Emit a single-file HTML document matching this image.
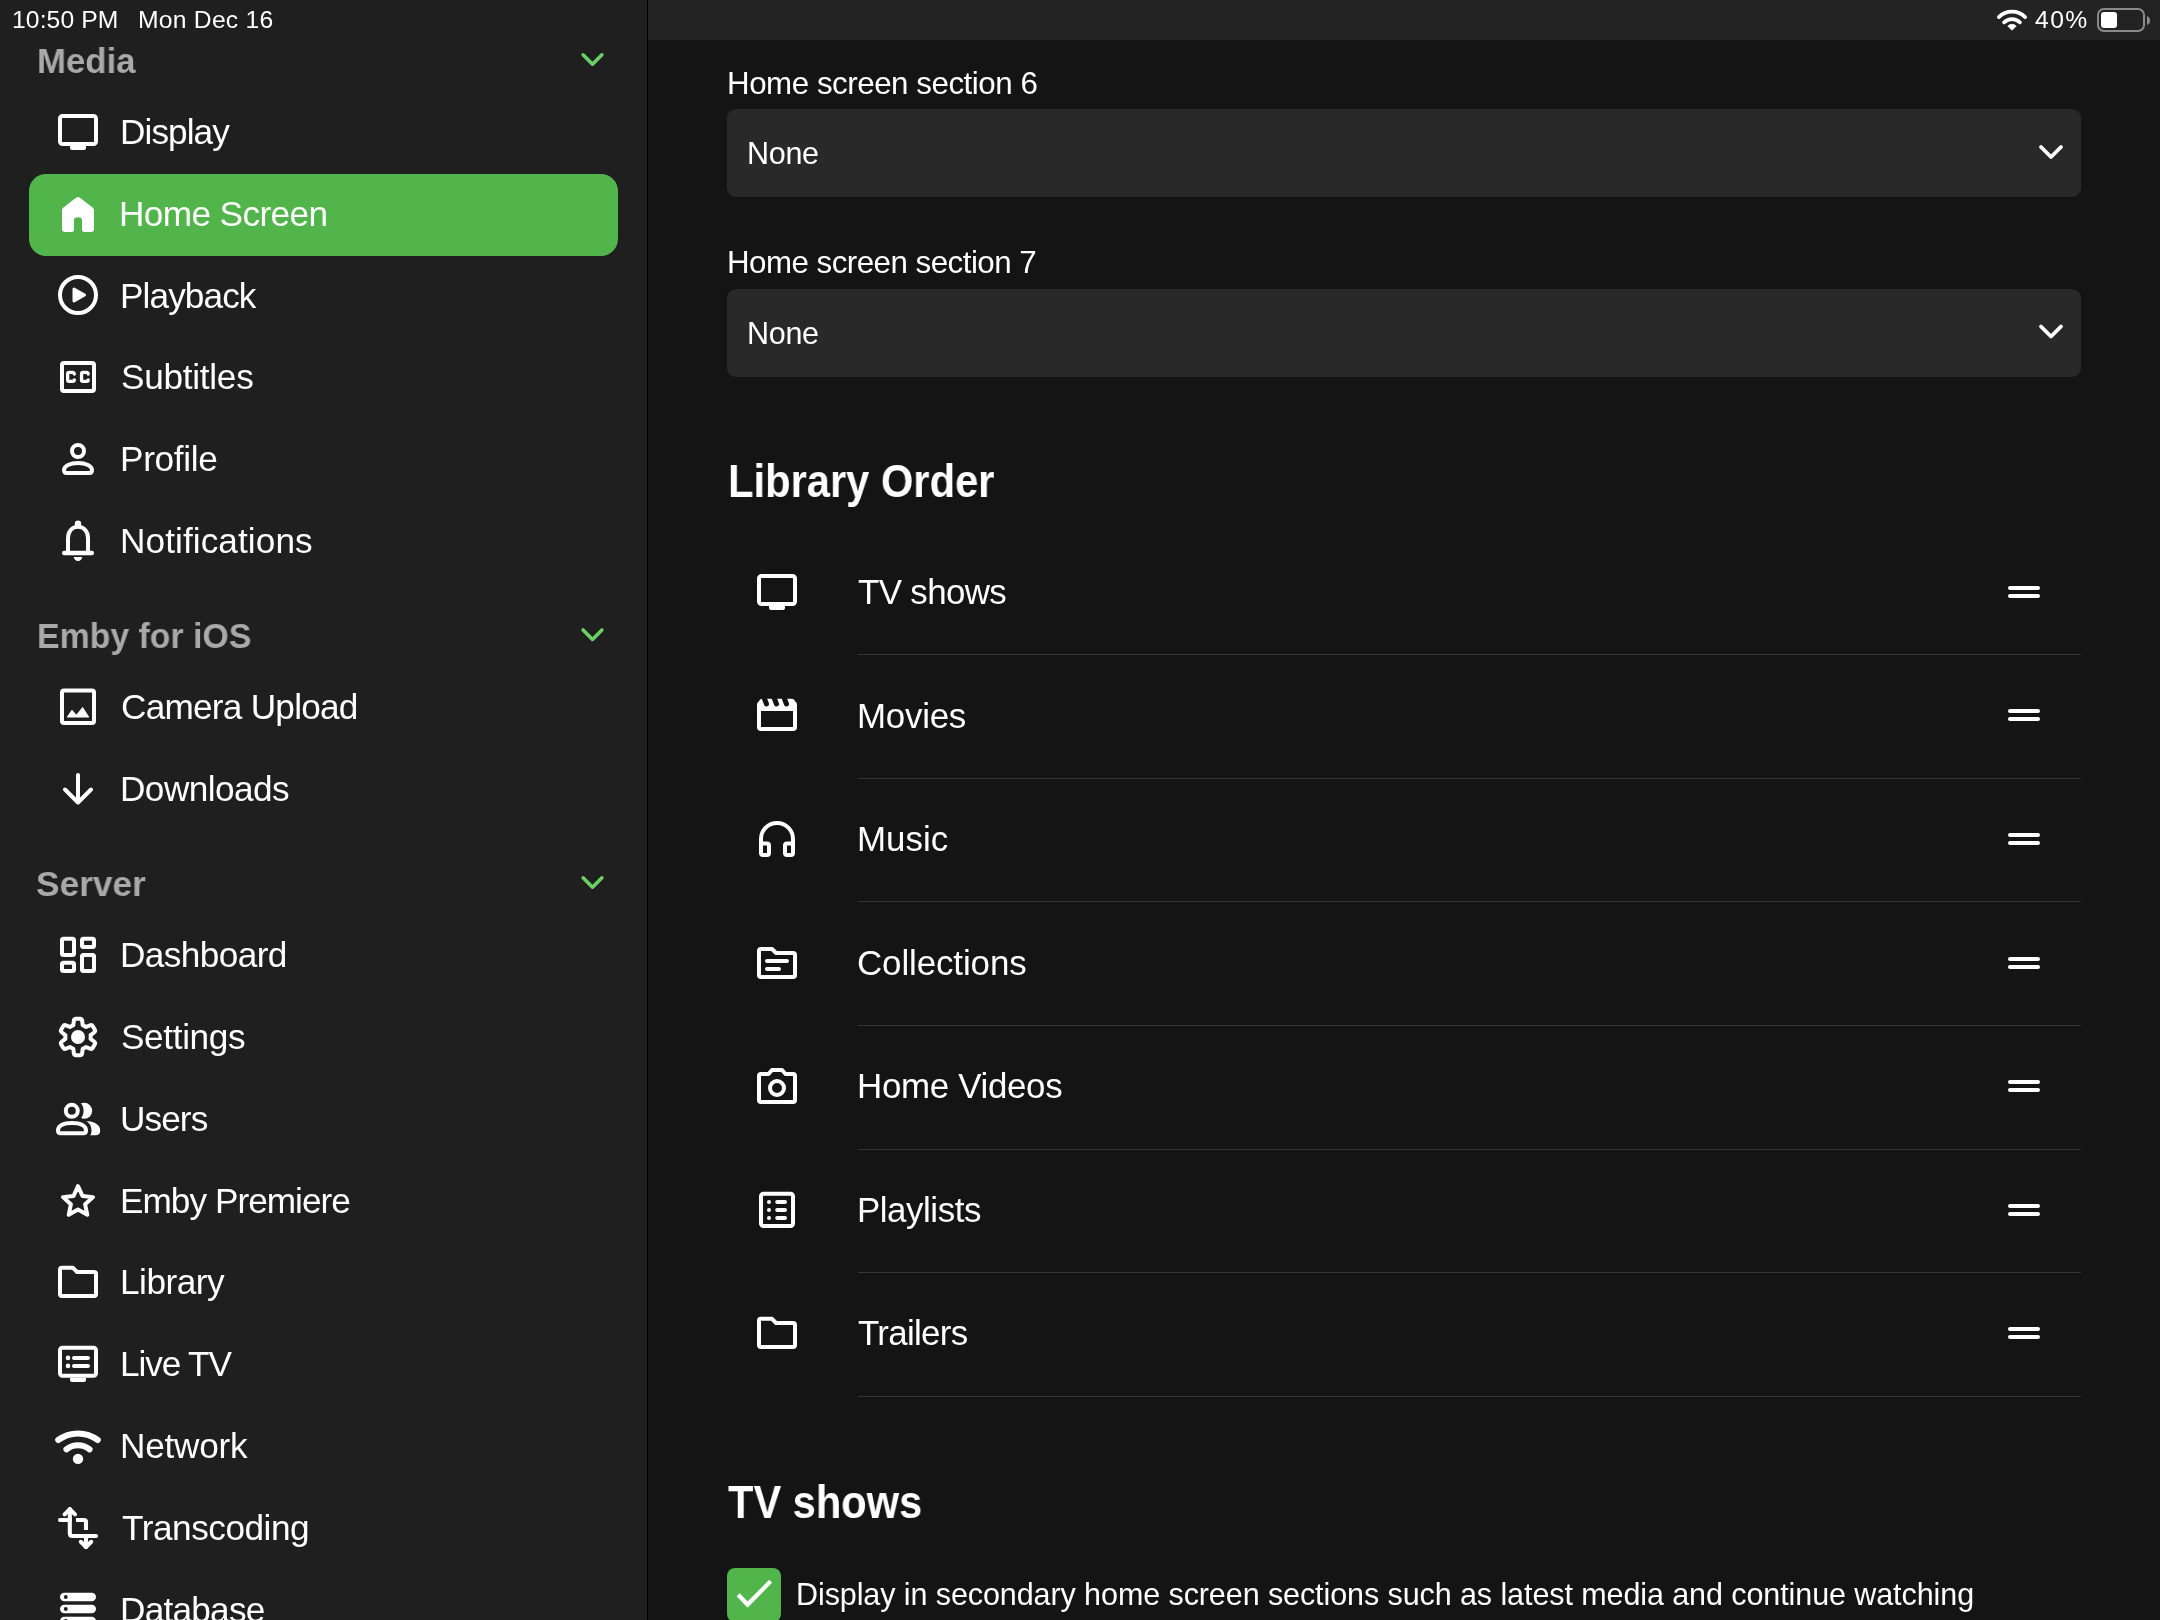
<!DOCTYPE html>
<html><head><meta charset="utf-8"><style>
html,body{margin:0;padding:0;width:2160px;height:1620px;overflow:hidden;background:#141414;font-family:'Liberation Sans', sans-serif}
.t{position:absolute;line-height:0;white-space:nowrap;will-change:transform}
#sb{position:absolute;left:0;top:0;width:647px;height:1620px;background:#1f1f1f}
#line{position:absolute;left:647px;top:0;width:1px;height:1620px;background:#000}
#top{position:absolute;left:648px;top:0;width:1512px;height:40px;background:#232323}
#hl{position:absolute;left:29px;top:174px;width:589px;height:82px;border-radius:17px;background:#52b54b}
.sel{position:absolute;left:727px;width:1354px;height:88px;border-radius:9px;background:#292929}
.hb{position:absolute;left:2008px;width:32px;height:4px;border-radius:2px;background:#fff}
.sep{position:absolute;left:858px;width:1223px;height:1px;background:#353535}
.cb{position:absolute;left:727px;top:1568px;width:54px;height:54px;border-radius:8px;background:#52b54b}
svg{position:absolute;left:0;top:0}
</style></head><body>
<div id="sb"></div><div id="line"></div><div id="top"></div><div id="hl"></div>
<div class="t" id="t0" style="left:12.20px;top:20.05px;font-size:24.7px;color:#fff;letter-spacing:0.100px;">10:50 PM</div>
<div class="t" id="t1" style="left:137.70px;top:20.05px;font-size:24.7px;color:#fff;letter-spacing:0.233px;">Mon Dec 16</div>
<div class="t" id="t2" style="left:2035.00px;top:20.05px;font-size:24.7px;color:#fff;letter-spacing:1.400px;">40%</div>
<div class="t" id="t3" style="left:36.64px;top:60.78px;font-size:35.5px;font-weight:bold;color:#a9a9a9;letter-spacing:0.000px;transform:scaleX(0.9799);transform-origin:0 0;">Media</div>
<div class="t" id="t4" style="left:36.79px;top:636.08px;font-size:35.5px;font-weight:bold;color:#a9a9a9;letter-spacing:0.000px;transform:scaleX(0.9532);transform-origin:0 0;">Emby for iOS</div>
<div class="t" id="t5" style="left:36.20px;top:884.49px;font-size:35.5px;font-weight:bold;color:#a9a9a9;letter-spacing:0.000px;transform:scaleX(0.9928);transform-origin:0 0;">Server</div>
<div class="t" id="t6" style="left:120.40px;top:131.58px;font-size:35.2px;color:#fff;letter-spacing:-0.917px;">Display</div>
<div class="t" id="t7" style="left:119.40px;top:213.58px;font-size:35.2px;color:#fff;letter-spacing:-0.610px;">Home Screen</div>
<div class="t" id="t8" style="left:120.40px;top:295.58px;font-size:35.2px;color:#fff;letter-spacing:-0.907px;">Playback</div>
<div class="t" id="t9" style="left:121.40px;top:376.58px;font-size:35.2px;color:#fff;letter-spacing:-0.275px;">Subtitles</div>
<div class="t" id="t10" style="left:120.40px;top:458.58px;font-size:35.2px;color:#fff;letter-spacing:-0.317px;">Profile</div>
<div class="t" id="t11" style="left:120.40px;top:540.58px;font-size:35.2px;color:#fff;letter-spacing:0.083px;">Notifications</div>
<div class="t" id="t12" style="left:121.40px;top:706.58px;font-size:35.2px;color:#fff;letter-spacing:-0.750px;">Camera Upload</div>
<div class="t" id="t13" style="left:120.40px;top:788.58px;font-size:35.2px;color:#fff;letter-spacing:-0.550px;">Downloads</div>
<div class="t" id="t14" style="left:120.40px;top:954.58px;font-size:35.2px;color:#fff;letter-spacing:-0.600px;">Dashboard</div>
<div class="t" id="t15" style="left:121.40px;top:1036.58px;font-size:35.2px;color:#fff;letter-spacing:-0.364px;">Settings</div>
<div class="t" id="t16" style="left:120.40px;top:1118.58px;font-size:35.2px;color:#fff;letter-spacing:-0.900px;">Users</div>
<div class="t" id="t17" style="left:120.40px;top:1200.58px;font-size:35.2px;color:#fff;letter-spacing:-0.967px;">Emby Premiere</div>
<div class="t" id="t18" style="left:120.40px;top:1281.58px;font-size:35.2px;color:#fff;letter-spacing:-0.483px;">Library</div>
<div class="t" id="t19" style="left:120.40px;top:1363.58px;font-size:35.2px;color:#fff;letter-spacing:-1.117px;">Live TV</div>
<div class="t" id="t20" style="left:120.40px;top:1445.58px;font-size:35.2px;color:#fff;letter-spacing:-0.250px;">Network</div>
<div class="t" id="t21" style="left:122.40px;top:1527.58px;font-size:35.2px;color:#fff;letter-spacing:-0.470px;">Transcoding</div>
<div class="t" id="t22" style="left:120.40px;top:1609.58px;font-size:35.2px;color:#fff;letter-spacing:-0.764px;">Database</div>
<div class="t" id="t23" style="left:727.20px;top:83.67px;font-size:31.3px;color:#fff;letter-spacing:-0.460px;">Home screen section 6</div>
<div class="t" id="t24" style="left:727.20px;top:263.07px;font-size:31.3px;color:#fff;letter-spacing:-0.520px;">Home screen section 7</div>
<div class="sel" style="top:109px"></div>
<div class="t" id="t25" style="left:747.00px;top:153.34px;font-size:30.5px;color:#fff;letter-spacing:-0.300px;">None</div>
<div class="sel" style="top:288.5px"></div>
<div class="t" id="t26" style="left:747.00px;top:332.83px;font-size:30.5px;color:#fff;letter-spacing:-0.300px;">None</div>
<div class="t" id="t27" style="left:727.63px;top:482.29px;font-size:45.8px;font-weight:bold;color:#fff;letter-spacing:0.000px;transform:scaleX(0.9103);transform-origin:0 0;">Library Order</div>
<div class="t" id="t28" style="left:857.50px;top:592.48px;font-size:34.9px;color:#fff;letter-spacing:-0.643px;">TV shows</div>
<div class="hb" style="top:586px"></div><div class="hb" style="top:594px"></div>
<div class="sep" style="top:654px"></div>
<div class="t" id="t29" style="left:856.90px;top:715.98px;font-size:34.9px;color:#fff;letter-spacing:-0.260px;">Movies</div>
<div class="hb" style="top:709px"></div><div class="hb" style="top:717px"></div>
<div class="sep" style="top:778px"></div>
<div class="t" id="t30" style="left:856.90px;top:839.48px;font-size:34.9px;color:#fff;letter-spacing:0.000px;">Music</div>
<div class="hb" style="top:833px"></div><div class="hb" style="top:841px"></div>
<div class="sep" style="top:901px"></div>
<div class="t" id="t31" style="left:856.90px;top:962.98px;font-size:34.9px;color:#fff;letter-spacing:-0.100px;">Collections</div>
<div class="hb" style="top:957px"></div><div class="hb" style="top:965px"></div>
<div class="sep" style="top:1025px"></div>
<div class="t" id="t32" style="left:856.70px;top:1086.48px;font-size:34.9px;color:#fff;letter-spacing:-0.320px;">Home Videos</div>
<div class="hb" style="top:1080px"></div><div class="hb" style="top:1088px"></div>
<div class="sep" style="top:1149px"></div>
<div class="t" id="t33" style="left:856.90px;top:1209.98px;font-size:34.9px;color:#fff;letter-spacing:-0.450px;">Playlists</div>
<div class="hb" style="top:1204px"></div><div class="hb" style="top:1212px"></div>
<div class="sep" style="top:1272px"></div>
<div class="t" id="t34" style="left:858.10px;top:1333.48px;font-size:34.9px;color:#fff;letter-spacing:-0.700px;">Trailers</div>
<div class="hb" style="top:1327px"></div><div class="hb" style="top:1335px"></div>
<div class="sep" style="top:1396px"></div>
<div class="t" id="t35" style="left:727.94px;top:1502.15px;font-size:46.5px;font-weight:bold;color:#fff;letter-spacing:0.000px;transform:scaleX(0.8945);transform-origin:0 0;">TV shows</div>
<div class="cb"></div>
<div class="t" id="t36" style="left:796.20px;top:1594.43px;font-size:30.5px;color:#fff;letter-spacing:-0.084px;">Display in secondary home screen sections such as latest media and continue watching</div>
<svg width="2160" height="1620" viewBox="0 0 2160 1620">
<path d="M583.1,54.8 L592.5,64.2 L601.9,54.8" fill="none" stroke="#6bcf68" stroke-width="3.6" stroke-linecap="round" stroke-linejoin="round"/>
<path d="M583.1,630.0 L592.5,639.4000000000001 L601.9,630.0" fill="none" stroke="#6bcf68" stroke-width="3.6" stroke-linecap="round" stroke-linejoin="round"/>
<path d="M583.1,877.8 L592.5,887.2 L601.9,877.8" fill="none" stroke="#6bcf68" stroke-width="3.6" stroke-linecap="round" stroke-linejoin="round"/>
<g transform="translate(78,132)"><rect x="-18" y="-16" width="36" height="28" rx="2.5" fill="none" stroke="#fff" stroke-width="4" stroke-linejoin="round" stroke-linecap="round"/><path d="M-8,14 H8 V16 Q8,18 6,18 H-6 Q-8,18 -8,16 Z" fill="#fff"/></g>
<g transform="translate(78,214)"><path d="M-1.6,-16.4 Q0,-17.6 1.6,-16.4 L14.6,-6.6 Q16,-5.6 16,-3.8 L16,15 Q16,18 13,18 L6.2,18 Q4,18 4,15.8 L4,6 Q4,3.6 1.6,3.6 L-1.6,3.6 Q-4,3.6 -4,6 L-4,15.8 Q-4,18 -6.2,18 L-13,18 Q-16,18 -16,15 L-16,-3.8 Q-16,-5.6 -14.6,-6.6 Z" fill="#fff"/></g>
<g transform="translate(78,296)"><circle cx="0" cy="-1" r="18" fill="none" stroke="#fff" stroke-width="4" stroke-linejoin="round" stroke-linecap="round"/><path d="M-4,-7 L6.5,-1 L-4,5 Z" fill="#fff" stroke="#fff" stroke-width="3" stroke-linejoin="round"/></g>
<g transform="translate(78,377)"><rect x="-16" y="-14" width="32" height="28" rx="2" fill="none" stroke="#fff" stroke-width="4" stroke-linejoin="round" stroke-linecap="round"/><path d="M-3.7,-2.9 Q-3.7,-4.55 -5.4,-4.55 H-9.0 Q-10.35,-4.55 -10.35,-3.2 V3.1 Q-10.35,4.45 -9.0,4.45 H-5.4 Q-3.7,4.45 -3.7,2.8" fill="none" stroke="#fff" stroke-width="3.3" stroke-linejoin="round" stroke-linecap="round"/><g transform="translate(13.9,0)"><path d="M-3.7,-2.9 Q-3.7,-4.55 -5.4,-4.55 H-9.0 Q-10.35,-4.55 -10.35,-3.2 V3.1 Q-10.35,4.45 -9.0,4.45 H-5.4 Q-3.7,4.45 -3.7,2.8" fill="none" stroke="#fff" stroke-width="3.3" stroke-linejoin="round" stroke-linecap="round"/></g></g>
<g transform="translate(78,459)"><circle cx="0" cy="-8" r="6" fill="none" stroke="#fff" stroke-width="4" stroke-linejoin="round" stroke-linecap="round"/><path d="M-14,11 C-14,7 -8,4 0,4 C8,4 14,7 14,11 Q14,14 11.5,14 L-11.5,14 Q-14,14 -14,11 Z" fill="none" stroke="#fff" stroke-width="4" stroke-linejoin="round" stroke-linecap="round"/></g>
<g transform="translate(78,541)"><path d="M-10,12 V-3 C-10,-9.5 -6,-14.2 0,-14.2 C6,-14.2 10,-9.5 10,-3 V12" fill="none" stroke="#fff" stroke-width="4" stroke-linejoin="round" stroke-linecap="round"/><rect x="-16" y="9.8" width="32" height="4.4" rx="2.2" fill="#fff"/><circle cx="0" cy="-17.2" r="3.2" fill="#fff"/><path d="M-4.2,15.9 H4.2 A4.2,4.2 0 0 1 -4.2,15.9 Z" fill="#fff"/></g>
<g transform="translate(78,707)"><rect x="-16" y="-16.4" width="32" height="32.5" rx="2" fill="none" stroke="#fff" stroke-width="4" stroke-linejoin="round" stroke-linecap="round"/><path d="M-10.5,10 L-6,3.6 L-1.6,8.6 L4.6,0.8 L10.5,10 Z" fill="#fff" stroke="#fff" stroke-width="1.2" stroke-linejoin="round"/></g>
<g transform="translate(78,789)"><path d="M0,-14 V13" fill="none" stroke="#fff" stroke-width="4" stroke-linejoin="round" stroke-linecap="round"/><path d="M-13,0.5 L0,13.5 L13,0.5" fill="none" stroke="#fff" stroke-width="4" stroke-linejoin="round" stroke-linecap="round"/></g>
<g transform="translate(78,955)"><rect x="-16" y="-16.2" width="12" height="16.2" rx="1.5" fill="none" stroke="#fff" stroke-width="4" stroke-linejoin="round" stroke-linecap="round"/><rect x="4" y="-16.2" width="12" height="8.1" rx="1.5" fill="none" stroke="#fff" stroke-width="4" stroke-linejoin="round" stroke-linecap="round"/><rect x="-16" y="7.8" width="12" height="8.3" rx="1.5" fill="none" stroke="#fff" stroke-width="4" stroke-linejoin="round" stroke-linecap="round"/><rect x="4" y="0" width="12" height="16.1" rx="1.5" fill="none" stroke="#fff" stroke-width="4" stroke-linejoin="round" stroke-linecap="round"/></g>
<g transform="translate(78,1037)"><path d="M-4.70,-11.80 L-4.15,-16.20 Q-3.90,-18.20 -1.90,-18.20 L1.90,-18.20 Q3.90,-18.20 4.15,-16.20 L4.70,-11.80 A12.70,12.70 0 0 1 7.87,-9.97 L11.95,-11.69 Q13.81,-12.48 14.81,-10.75 L16.71,-7.45 Q17.71,-5.72 16.10,-4.51 L12.57,-1.83 A12.70,12.70 0 0 1 12.57,1.83 L16.10,4.51 Q17.71,5.72 16.71,7.45 L14.81,10.75 Q13.81,12.48 11.95,11.69 L7.87,9.97 A12.70,12.70 0 0 1 4.70,11.80 L4.15,16.20 Q3.90,18.20 1.90,18.20 L-1.90,18.20 Q-3.90,18.20 -4.15,16.20 L-4.70,11.80 A12.70,12.70 0 0 1 -7.87,9.97 L-11.95,11.69 Q-13.81,12.48 -14.81,10.75 L-16.71,7.45 Q-17.71,5.72 -16.10,4.51 L-12.57,1.83 A12.70,12.70 0 0 1 -12.57,-1.83 L-16.10,-4.51 Q-17.71,-5.72 -16.71,-7.45 L-14.81,-10.75 Q-13.81,-12.48 -11.95,-11.69 L-7.87,-9.97 A12.70,12.70 0 0 1 -4.70,-11.80 Z" fill="none" stroke="#fff" stroke-width="4" stroke-linejoin="round" stroke-linecap="round"/><circle cx="0" cy="0" r="7" fill="#fff"/></g>
<g transform="translate(78,1119)"><circle cx="6.2" cy="-8.2" r="8" fill="#fff"/><g transform="translate(12.2,0)"><path d="M-20,11.5 C-20,7 -15,4 -6,4 C3,4 8,7 8,11.5 Q8,14.2 5.5,14.2 L-17.5,14.2 Q-20,14.2 -20,11.5 Z" fill="#fff" stroke="#fff" stroke-width="4" stroke-linejoin="round"/></g><circle cx="-6.2" cy="-8.2" r="11.8" fill="#1f1f1f"/><path d="M-20,11.5 C-20,7 -15,4 -6,4 C3,4 8,7 8,11.5 Q8,14.2 5.5,14.2 L-17.5,14.2 Q-20,14.2 -20,11.5 Z" fill="#1f1f1f" stroke="#1f1f1f" stroke-width="11.2" stroke-linejoin="round"/><circle cx="-6.2" cy="-8.2" r="6" fill="none" stroke="#fff" stroke-width="4" stroke-linejoin="round" stroke-linecap="round"/><path d="M-20,11.5 C-20,7 -15,4 -6,4 C3,4 8,7 8,11.5 Q8,14.2 5.5,14.2 L-17.5,14.2 Q-20,14.2 -20,11.5 Z" fill="none" stroke="#fff" stroke-width="4" stroke-linejoin="round" stroke-linecap="round"/></g>
<g transform="translate(78,1201)"><path d="M0.00,-14.80 L4.41,-5.07 L15.03,-3.88 L7.13,3.32 L9.29,13.78 L0.00,8.50 L-9.29,13.78 L-7.13,3.32 L-15.03,-3.88 L-4.41,-5.07 Z" fill="none" stroke="#fff" stroke-width="4" stroke-linejoin="round" stroke-linecap="round"/></g>
<g transform="translate(78,1282)"><path d="M-16,-14.2 H-5.0 L-0.9,-10 H16 Q18,-10 18,-8 V12 Q18,14 16,14 H-16 Q-18,14 -18,12 V-12.2 Q-18,-14.2 -16,-14.2 Z" fill="none" stroke="#fff" stroke-width="4" stroke-linejoin="round" stroke-linecap="round"/></g>
<g transform="translate(78,1364)"><rect x="-18" y="-16.3" width="36" height="28" rx="2.5" fill="none" stroke="#fff" stroke-width="4" stroke-linejoin="round" stroke-linecap="round"/><path d="M-8,13.7 H8 V16 Q8,18 6,18 H-6 Q-8,18 -8,16 Z" fill="#fff"/><circle cx="-10" cy="-6.1" r="2.3" fill="#fff"/><circle cx="-10" cy="1.9" r="2.3" fill="#fff"/><path d="M-4,-6.1 H10 M-4,1.9 H10" fill="none" stroke="#fff" stroke-width="4" stroke-linejoin="round" stroke-linecap="round"/></g>
<g transform="translate(78,1446)"><path d="M-19.8,-6 A33,33 0 0 1 19.8,-6" fill="none" stroke="#fff" stroke-width="6" stroke-linecap="round"/><path d="M-11.6,3.4 A18.2,18.2 0 0 1 11.6,3.4" fill="none" stroke="#fff" stroke-width="6" stroke-linecap="round"/><circle cx="0" cy="12.9" r="5.2" fill="#fff"/></g>
<g transform="translate(78,1528)"><path d="M-8.2,-19 V5.2 Q-8.2,8 -5.4,8 H18" fill="none" stroke="#fff" stroke-width="4.1" stroke-linejoin="round" stroke-linecap="round"/><path d="M-18.0,-8 H-8.2" fill="none" stroke="#fff" stroke-width="4.1" stroke-linejoin="round" stroke-linecap="round"/><path d="M-2,-8 H6 Q8,-8 8,-6 V2" fill="none" stroke="#fff" stroke-width="4.1" stroke-linejoin="round"/><path d="M-13.4,-13.6 L-8.2,-18.8 L-3.0,-13.6" fill="none" stroke="#fff" stroke-width="4.1" stroke-linejoin="round" stroke-linecap="round"/><path d="M8,8 V19" fill="none" stroke="#fff" stroke-width="4.1" stroke-linejoin="round" stroke-linecap="round"/><path d="M2.8,13.8 L8,19 L13.2,13.8" fill="none" stroke="#fff" stroke-width="4.1" stroke-linejoin="round" stroke-linecap="round"/></g>
<g transform="translate(78,1610)"><rect x="-18" y="-17.2" width="36" height="8.4" rx="4.2" fill="#fff"/><circle cx="-12.2" cy="-13.0" r="1.9" fill="#1f1f1f"/><rect x="-18" y="-5.2" width="36" height="8.4" rx="4.2" fill="#fff"/><circle cx="-12.2" cy="-1.0" r="1.9" fill="#1f1f1f"/><rect x="-18" y="6.8" width="36" height="8.4" rx="4.2" fill="#fff"/><circle cx="-12.2" cy="11.0" r="1.9" fill="#1f1f1f"/></g>
<path d="M2041,147 L2051,157 L2061,147" fill="none" stroke="#fff" stroke-width="3.8" stroke-linecap="round" stroke-linejoin="round"/>
<path d="M2041,326.5 L2051,336.5 L2061,326.5" fill="none" stroke="#fff" stroke-width="3.8" stroke-linecap="round" stroke-linejoin="round"/>
<g transform="translate(777,592)"><rect x="-18" y="-16" width="36" height="28" rx="2.5" fill="none" stroke="#fff" stroke-width="4" stroke-linejoin="round" stroke-linecap="round"/><path d="M-8,14 H8 V16 Q8,18 6,18 H-6 Q-8,18 -8,16 Z" fill="#fff"/></g>
<g transform="translate(777,715)"><path d="M-16,-12 H16 Q18,-12 18,-10 V12 Q18,14 16,14 H-16 Q-18,14 -18,12 V-10 Q-18,-12 -16,-12 Z" fill="none" stroke="#fff" stroke-width="4" stroke-linejoin="round" stroke-linecap="round"/><path d="M-18,-3.9 V-12.6 Q-18,-16.2 -14.4,-16.2 H14.4 Q18,-16.2 18,-12.6 V-3.9 Z" fill="#fff"/><path d="M-13.4,-18.5 L-10.5,-11 M-3.4,-18.5 L-0.5,-11 M6.6,-18.5 L9.5,-11" stroke="#141414" stroke-width="5" stroke-linecap="round"/></g>
<g transform="translate(777,839)"><path d="M-16,6 V0 A16,16 0 0 1 16,0 V6" fill="none" stroke="#fff" stroke-width="4" stroke-linejoin="round" stroke-linecap="round"/><path d="M-14,4.5 H-10 Q-8,4.5 -8,6.5 V14 Q-8,16 -10,16 H-14 Q-16,16 -16,14 V6.5 Q-16,4.5 -14,4.5 Z" fill="none" stroke="#fff" stroke-width="4" stroke-linejoin="round" stroke-linecap="round"/><path d="M10,4.5 H14 Q16,4.5 16,6.5 V14 Q16,16 14,16 H10 Q8,16 8,14 V6.5 Q8,4.5 10,4.5 Z" fill="none" stroke="#fff" stroke-width="4" stroke-linejoin="round" stroke-linecap="round"/></g>
<g transform="translate(777,963)"><path d="M-16,-14 H-5.0 L-0.9,-10 H16 Q18,-10 18,-8 V12 Q18,14 16,14 H-16 Q-18,14 -18,12 V-12 Q-18,-14 -16,-14 Z" fill="none" stroke="#fff" stroke-width="4" stroke-linejoin="round" stroke-linecap="round"/><path d="M-10,-2 H10 M-10,6 H2" fill="none" stroke="#fff" stroke-width="4" stroke-linejoin="round" stroke-linecap="round"/></g>
<g transform="translate(777,1086)"><path d="M-16,-12 H-8.5 L-5,-16 H5 L8.5,-12 H16 Q18,-12 18,-10 V14 Q18,16 16,16 H-16 Q-18,16 -18,14 V-10 Q-18,-12 -16,-12 Z" fill="none" stroke="#fff" stroke-width="4" stroke-linejoin="round" stroke-linecap="round"/><circle cx="0" cy="2" r="7" fill="none" stroke="#fff" stroke-width="4" stroke-linejoin="round" stroke-linecap="round"/></g>
<g transform="translate(777,1210)"><rect x="-16" y="-16.3" width="32" height="32.3" rx="2.5" fill="none" stroke="#fff" stroke-width="4" stroke-linejoin="round" stroke-linecap="round"/><circle cx="-8.0" cy="-8" r="2.0" fill="#fff"/><circle cx="-8.0" cy="0" r="2.0" fill="#fff"/><circle cx="-8.0" cy="8" r="2.0" fill="#fff"/><path d="M0.2,-8 H8 M0.2,0 H8 M0.2,8 H8" fill="none" stroke="#fff" stroke-width="4" stroke-linejoin="round" stroke-linecap="round"/></g>
<g transform="translate(777,1333)"><path d="M-16,-14.2 H-5.0 L-0.9,-10 H16 Q18,-10 18,-8 V12 Q18,14 16,14 H-16 Q-18,14 -18,12 V-12.2 Q-18,-14.2 -16,-14.2 Z" fill="none" stroke="#fff" stroke-width="4" stroke-linejoin="round" stroke-linecap="round"/></g>
<path d="M738.2,1594.8 L747.6,1604.6 L770.6,1581.3" fill="none" stroke="#fff" stroke-width="4.3" stroke-linecap="butt" stroke-linejoin="miter"/>
<path d="M1998.85,17.15 A18.6,18.6 0 0 1 2025.15,17.15" fill="none" stroke="#fff" stroke-width="3.7" stroke-linecap="round"/><path d="M2004.08,22.38 A11.2,11.2 0 0 1 2019.92,22.38" fill="none" stroke="#fff" stroke-width="3.7" stroke-linecap="round"/><path d="M2012,30.3 L2007.8,26.1 A5.9,5.9 0 0 1 2016.2,26.1 Z" fill="#fff" stroke="#fff" stroke-width="0.8" stroke-linejoin="round"/>
<rect x="2098" y="9" width="46" height="22" rx="6" fill="none" stroke="#8a8a8a" stroke-width="2"/><rect x="2101" y="12" width="16" height="16" rx="3" fill="#fff"/><path d="M2147,16 Q2150,17 2150,20.5 Q2150,24 2147,25 Z" fill="#8a8a8a"/>
</svg>
</body></html>
